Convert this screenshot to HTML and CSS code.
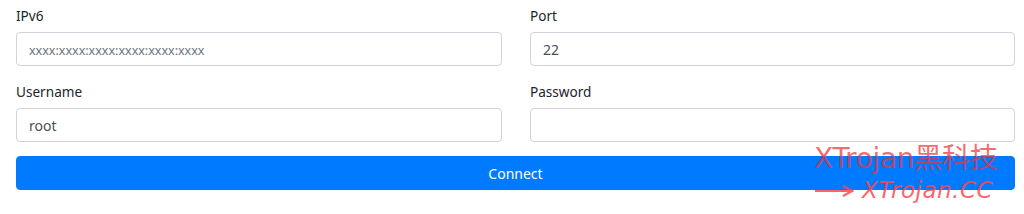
FILE: index.html
```html
<!DOCTYPE html>
<html>
<head>
<meta charset="utf-8">
<link rel="stylesheet" href="styles.css">
</head>
<body>
<form class="form">
  <div class="row">
    <div class="field">
      <label class="label">IPv6</label>
      <input class="input input-ip" type="text" placeholder="xxxx:xxxx:xxxx:xxxx:xxxx:xxxx">
    </div>
    <div class="field">
      <label class="label">Port</label>
      <input class="input" type="text" value="22">
    </div>
  </div>
  <div class="row">
    <div class="field">
      <label class="label">Username</label>
      <input class="input" type="text" value="root">
    </div>
    <div class="field">
      <label class="label">Password</label>
      <input class="input" type="password">
    </div>
  </div>
  <button class="btn" type="button">Connect</button>
</form>
<div class="watermark">
  <div class="wm-title">XTrojan黑科技</div>
  <div class="wm-sub"><svg class="wm-arrow" width="40" height="14" viewBox="0 0 40 14"><path d="M1 7H37M29 2L38 7L29 12" fill="none" stroke="currentColor" stroke-width="2.2"/></svg><span class="wm-url">XTrojan.CC</span></div>
</div>
</body>
</html>
```
FILE: styles.css
```css
html, body {
  margin: 0;
  padding: 0;
  background: #fff;
}
body {
  font-family: "Segoe UI", "Noto Sans", "Open Sans", sans-serif;
  font-size: 14px;
  color: #212529;
  position: relative;
  width: 1024px;
  height: 214px;
  overflow: hidden;
}
.form {
  padding: 5px 9px 0 16px;
  display: flex;
  flex-direction: column;
}
.row {
  display: grid;
  grid-template-columns: 486px 485px;
  column-gap: 28px;
  margin-bottom: 15px;
}
.row + .row {
  margin-bottom: 14px;
}
.field {
  display: flex;
  flex-direction: column;
}
.label {
  line-height: 21px;
  height: 21px;
  margin-bottom: 6px;
  color: #212529;
  font-size: 13.6px;
}
.input {
  box-sizing: border-box;
  height: 34px;
  border: 1px solid #ced4da;
  border-radius: 4px;
  padding: 0 12px;
  font-family: inherit;
  font-size: 14px;
  color: #495057;
  background: #fff;
  outline: none;
}
.input-ip::placeholder {
  color: #6c757d;
  font-size: 12.5px;
}
.btn {
  box-sizing: border-box;
  width: 999px;
  height: 34px;
  border: 1px solid #007bff;
  border-radius: 4px;
  background: #007bff;
  color: #fff;
  font-family: inherit;
  font-size: 14px;
  padding: 0;
}
.watermark {
  position: absolute;
  left: 814px;
  top: 145px;
  color: rgba(240, 50, 60, 0.72);
  font-family: "DejaVu Sans", "Noto Sans CJK SC", sans-serif;
  line-height: 1;
}
.wm-title {
  font-size: 28px;
  letter-spacing: -0.3px;
  white-space: nowrap;
}
.wm-sub {
  display: flex;
  align-items: center;
  margin-top: 6px;
  white-space: nowrap;
}
.wm-arrow {
  margin-right: 8px;
  color: rgba(255, 70, 80, 0.85);
}
.wm-url {
  font-size: 23px;
  font-style: italic;
  color: rgba(255, 70, 80, 0.85);
  letter-spacing: 0.5px;
}
```
